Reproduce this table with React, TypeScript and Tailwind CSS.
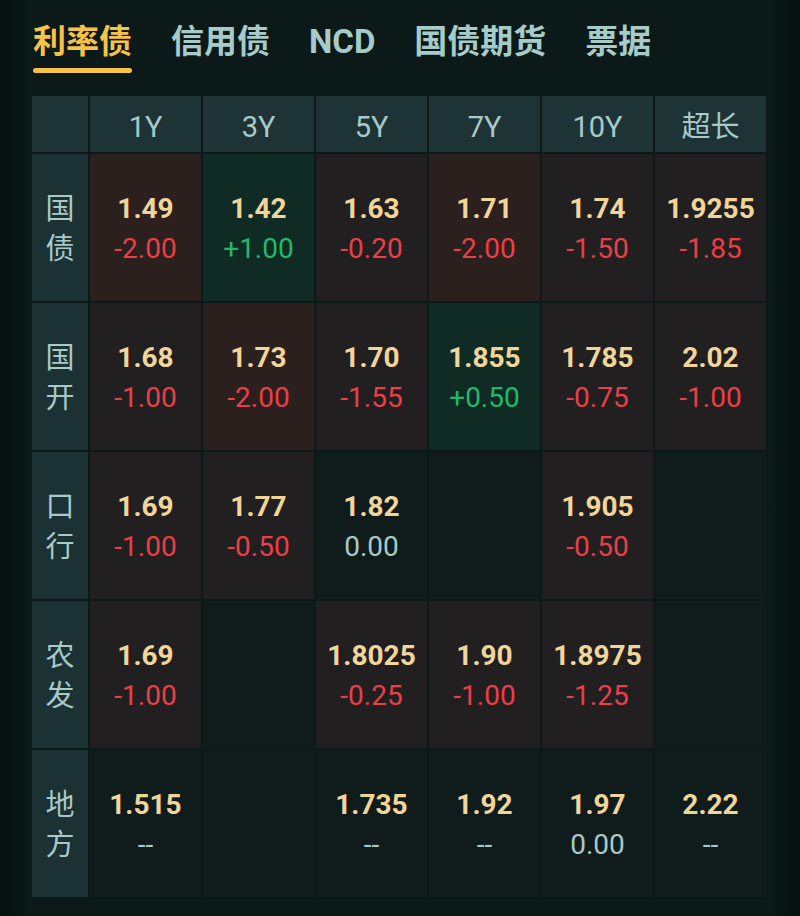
import React from "react";

type Tone = "red" | "green" | "grey" | "dark";
type Cell = { v?: string; c?: string; tone: Tone };

const cols = ["1Y", "3Y", "5Y", "7Y", "10Y", "超长"];

const rows: { label: [string, string]; cells: Cell[] }[] = [
  {
    label: ["国", "债"],
    cells: [
      { v: "1.49", c: "-2.00", tone: "red" },
      { v: "1.42", c: "+1.00", tone: "green" },
      { v: "1.63", c: "-0.20", tone: "grey" },
      { v: "1.71", c: "-2.00", tone: "red" },
      { v: "1.74", c: "-1.50", tone: "grey" },
      { v: "1.9255", c: "-1.85", tone: "grey" },
    ],
  },
  {
    label: ["国", "开"],
    cells: [
      { v: "1.68", c: "-1.00", tone: "grey" },
      { v: "1.73", c: "-2.00", tone: "red" },
      { v: "1.70", c: "-1.55", tone: "grey" },
      { v: "1.855", c: "+0.50", tone: "green" },
      { v: "1.785", c: "-0.75", tone: "grey" },
      { v: "2.02", c: "-1.00", tone: "grey" },
    ],
  },
  {
    label: ["口", "行"],
    cells: [
      { v: "1.69", c: "-1.00", tone: "grey" },
      { v: "1.77", c: "-0.50", tone: "grey" },
      { v: "1.82", c: "0.00", tone: "dark" },
      { tone: "dark" },
      { v: "1.905", c: "-0.50", tone: "grey" },
      { tone: "dark" },
    ],
  },
  {
    label: ["农", "发"],
    cells: [
      { v: "1.69", c: "-1.00", tone: "grey" },
      { tone: "dark" },
      { v: "1.8025", c: "-0.25", tone: "grey" },
      { v: "1.90", c: "-1.00", tone: "grey" },
      { v: "1.8975", c: "-1.25", tone: "grey" },
      { tone: "dark" },
    ],
  },
  {
    label: ["地", "方"],
    cells: [
      { v: "1.515", c: "--", tone: "dark" },
      { tone: "dark" },
      { v: "1.735", c: "--", tone: "dark" },
      { v: "1.92", c: "--", tone: "dark" },
      { v: "1.97", c: "0.00", tone: "dark" },
      { v: "2.22", c: "--", tone: "dark" },
    ],
  },
];

const toneBg: Record<Tone, string> = {
  red: "bg-[#2c201e]",
  green: "bg-[#0f2b24]",
  grey: "bg-[#221f20]",
  dark: "bg-[#101c1c]",
};

function changeColor(c: string) {
  if (c.startsWith("+")) return "text-[#22b96c]";
  if (c.startsWith("-") && c !== "--") return "text-[#ea3f48]";
  return "text-[#a9c9c9]";
}

const tabs = ["利率债", "信用债", "NCD", "国债期货", "票据"];

export default function App() {
  return (
    <div
      className="w-[800px] h-[916px] overflow-hidden bg-[linear-gradient(90deg,#051110_0px,#071514_18px,#0b1919_28px,#0b1919_772px,#071514_782px,#051110_800px)]"
      style={{ fontFamily: 'Roboto, "Noto Sans CJK SC", sans-serif' }}
    >
      <div className="flex items-start gap-[39px] pl-[33px] pt-[21px] h-[96px]">
        {tabs.map((t, i) => (
          <div key={t} className="flex flex-col items-center">
            <span
              className={`text-[33px] leading-[42px] font-bold ${
                i === 0 ? "text-[#f5c24c]" : "text-[#a7cbc9]"
              }`}
            >
              {t}
            </span>
            {i === 0 && (
              <div className="mt-[5px] h-[5px] w-full rounded-full bg-[#f5c24c]" />
            )}
          </div>
        ))}
      </div>
      <div className="ml-[32px] w-[735px] grid grid-cols-[56px_repeat(6,111px)] grid-rows-[56px_repeat(5,147px)] gap-[2px]">
        <div className="bg-[#1e3335]" />
        {cols.map((c) => (
          <div
            key={c}
            className="bg-[#1e3335] flex items-center justify-center pt-[7px] text-[29px] text-[#a9c9c9]"
          >
            {c}
          </div>
        ))}
        {rows.map((r, ri) => (
          <React.Fragment key={ri}>
            <div className="bg-[#1b3134] flex flex-col items-center justify-center pt-[2px] text-[29px] leading-[40px] text-[#a9c9c9]">
              <span>{r.label[0]}</span>
              <span>{r.label[1]}</span>
            </div>
            {r.cells.map((cell, ci) => (
              <div
                key={ci}
                className={`${toneBg[cell.tone]} flex flex-col items-center justify-center pt-[2px] leading-[40px]`}
              >
                {cell.v && (
                  <span className="text-[28px] font-bold text-[#f1d59b]">{cell.v}</span>
                )}
                {cell.c && (
                  <span className={`text-[28px] ${changeColor(cell.c)}`}>{cell.c}</span>
                )}
              </div>
            ))}
          </React.Fragment>
        ))}
      </div>
    </div>
  );
}
